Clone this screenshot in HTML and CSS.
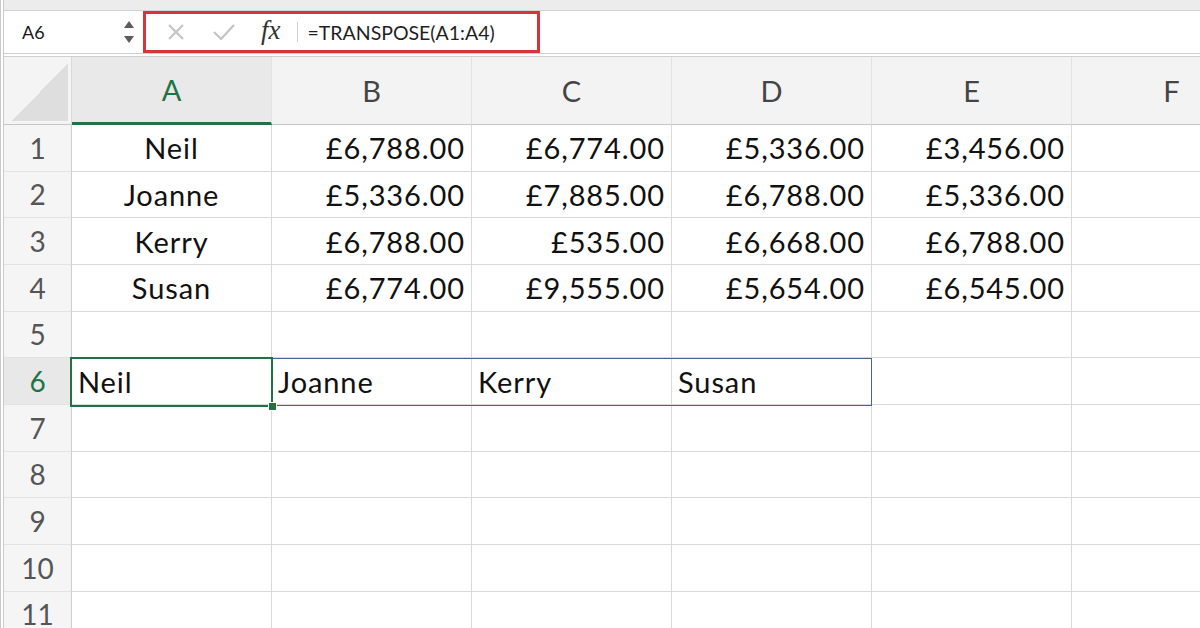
FILE: index.html
```html
<!DOCTYPE html>
<html lang="en">
<head>
  <meta charset="UTF-8" />
  <meta name="viewport" content="width=device-width, initial-scale=1.0" />
  <title>TRANSPOSE</title>
  <link rel="stylesheet" href="styles.css">
</head>
<body>
  <div class="app">
    <div class="topbar"></div>

    <div class="formula-bar">
      <div class="name-box">
        <span>A6</span>
        <span class="spinner">
          <svg width="12" height="24" viewBox="0 0 12 24"><path d="M6 1 L11 8 L1 8 Z" fill="#5a5a5a"/><path d="M1 16 L11 16 L6 23 Z" fill="#5a5a5a"/></svg>
        </span>
      </div>
      <div class="formula-box">
        <svg class="icon" width="20" height="20" viewBox="0 0 20 20"><path d="M3 3 L17 17 M17 3 L3 17" stroke="#c4c4c4" stroke-width="2.2" fill="none"/></svg>
        <svg class="icon" width="24" height="20" viewBox="0 0 24 20"><path d="M2 10 L9 17 L22 3" stroke="#c4c4c4" stroke-width="2.2" fill="none"/></svg>
        <span class="fx">fx</span>
        <span class="sep"></span>
        <span class="formula">=TRANSPOSE(A1:A4)</span>
      </div>
    </div>

    <div class="sheet">
      <div class="corner"><span></span></div>
      <div class="col-head active">A</div>
      <div class="col-head">B</div>
      <div class="col-head">C</div>
      <div class="col-head">D</div>
      <div class="col-head">E</div>
      <div class="col-head">F</div>

      <div class="row-head">1</div>
      <div class="cell center">Neil</div>
      <div class="cell num">£6,788.00</div>
      <div class="cell num">£6,774.00</div>
      <div class="cell num">£5,336.00</div>
      <div class="cell num">£3,456.00</div>
      <div class="cell"></div>

      <div class="row-head">2</div>
      <div class="cell center">Joanne</div>
      <div class="cell num">£5,336.00</div>
      <div class="cell num">£7,885.00</div>
      <div class="cell num">£6,788.00</div>
      <div class="cell num">£5,336.00</div>
      <div class="cell"></div>

      <div class="row-head">3</div>
      <div class="cell center">Kerry</div>
      <div class="cell num">£6,788.00</div>
      <div class="cell num">£535.00</div>
      <div class="cell num">£6,668.00</div>
      <div class="cell num">£6,788.00</div>
      <div class="cell"></div>

      <div class="row-head">4</div>
      <div class="cell center">Susan</div>
      <div class="cell num">£6,774.00</div>
      <div class="cell num">£9,555.00</div>
      <div class="cell num">£5,654.00</div>
      <div class="cell num">£6,545.00</div>
      <div class="cell"></div>

      <div class="row-head">5</div>
      <div class="cell"></div><div class="cell"></div><div class="cell"></div>
      <div class="cell"></div><div class="cell"></div><div class="cell"></div>

      <div class="row-head active">6</div>
      <div class="cell">Neil</div>
      <div class="cell">Joanne</div>
      <div class="cell">Kerry</div>
      <div class="cell">Susan</div>
      <div class="cell"></div><div class="cell"></div>

      <div class="row-head">7</div>
      <div class="cell"></div><div class="cell"></div><div class="cell"></div>
      <div class="cell"></div><div class="cell"></div><div class="cell"></div>

      <div class="row-head">8</div>
      <div class="cell"></div><div class="cell"></div><div class="cell"></div>
      <div class="cell"></div><div class="cell"></div><div class="cell"></div>

      <div class="row-head">9</div>
      <div class="cell"></div><div class="cell"></div><div class="cell"></div>
      <div class="cell"></div><div class="cell"></div><div class="cell"></div>

      <div class="row-head">10</div>
      <div class="cell"></div><div class="cell"></div><div class="cell"></div>
      <div class="cell"></div><div class="cell"></div><div class="cell"></div>

      <div class="row-head">11</div>
      <div class="cell"></div><div class="cell"></div><div class="cell"></div>
      <div class="cell"></div><div class="cell"></div><div class="cell"></div>

      <!-- spill range and active cell -->
      <div class="spill"></div>
      <div class="selection"><span class="handle"></span></div>
    </div>
  </div>
</body>
</html>
```

FILE: styles.css
```css
:root {
  --grid: #d9d9d9;
  --head-bg: #f3f3f3;
  --green: #217346;
  --red: #d8333b;
}

body {
  margin: 0;
  background: #fff;
  font-family: 'Lato', sans-serif;
  color: #111;
  overflow: hidden;
}

.app {
  width: 1200px;
  height: 628px;
  overflow: hidden;
  box-sizing: border-box;
  border-left: 4px double #c9c9c9;
}

.topbar {
  height: 10px;
  background: #ececec;
  border-bottom: 1px solid #d2d2d2;
}

.formula-bar {
  display: flex;
  align-items: stretch;
  height: 42px;
  border-bottom: 4px double #cfcfcf;
  box-sizing: content-box;
}

.name-box {
  width: 139px;
  display: flex;
  align-items: center;
  justify-content: space-between;
  padding: 0 8px 0 18px;
  box-sizing: border-box;
  font-size: 18px;
  color: #1a1a1a;
}

.spinner svg {
  display: block;
}

.formula-box {
  width: 397px;
  border: 3px solid var(--red);
  box-sizing: border-box;
  display: flex;
  align-items: center;
  padding-left: 20px;
}

.formula-box .icon {
  margin-right: 26px;
}

.fx {
  font-family: 'Liberation Serif', serif;
  font-style: italic;
  font-size: 27px;
  color: #333;
  margin-left: -1px;
  padding-bottom: 4px;
}

.sep {
  width: 1px;
  height: 20px;
  background: #d0d0d0;
  margin: 0 10px 0 16px;
}

.formula {
  font-size: 19.5px;
  color: #1f1f1f;
}

.sheet {
  position: relative;
  display: grid;
  grid-template-columns: 68px repeat(6, 200px);
  grid-template-rows: 68px repeat(11, 46.67px);
}

.corner {
  position: relative;
  background: #f4f4f4;
  border-right: 1px solid var(--grid);
  border-bottom: 1px solid #c6c6c6;
}

.corner span {
  position: absolute;
  left: 8px;
  right: 3px;
  top: 6px;
  bottom: 3px;
  background: linear-gradient(to bottom right, transparent 50%, #dedede 50%);
}

.col-head {
  display: flex;
  align-items: center;
  justify-content: center;
  background: var(--head-bg);
  border-right: 1px solid #e2e2e2;
  border-bottom: 1px solid #c6c6c6;
  font-size: 29px;
  color: #444;
}

.col-head.active {
  background: #e9e9e9;
  color: var(--green);
  border-bottom: 3px solid var(--green);
}

.row-head {
  display: flex;
  align-items: center;
  justify-content: center;
  background: #f5f5f5;
  border-right: 1px solid #cdcdcd;
  border-bottom: 1px solid #e2e2e2;
  font-size: 28px;
  color: #555;
}

.row-head.active {
  background: #e8e8e8;
  color: var(--green);
}

.cell {
  display: flex;
  align-items: center;
  padding: 0 6px;
  border-right: 1px solid var(--grid);
  border-bottom: 1px solid var(--grid);
  font-size: 29px;
  letter-spacing: 0.9px;
  white-space: nowrap;
  overflow: hidden;
}

.cell.center {
  justify-content: center;
}

.cell.num {
  justify-content: flex-end;
}

.spill {
  position: absolute;
  left: 67px;
  top: 301px;
  width: 801px;
  height: 48px;
  border: 1px solid #48638e;
  box-sizing: border-box;
}

.selection {
  position: absolute;
  left: 66px;
  top: 300px;
  width: 203px;
  height: 50px;
  border: 2px solid var(--green);
  box-sizing: border-box;
}

.handle {
  position: absolute;
  right: -6px;
  bottom: -6px;
  width: 7px;
  height: 7px;
  background: var(--green);
  border: 1px solid #fff;
}
```
